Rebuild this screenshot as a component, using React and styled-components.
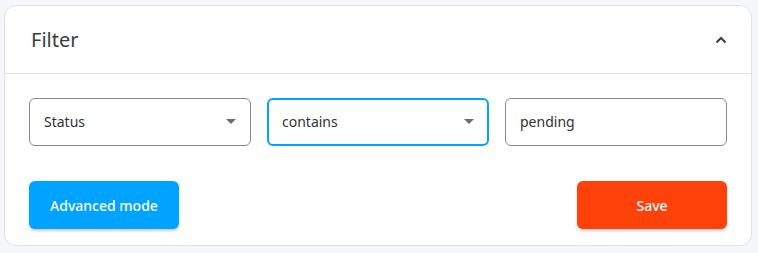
import React from "react";
import styled, { createGlobalStyle } from "styled-components";

const Global = createGlobalStyle`
  html, body { margin: 0; padding: 0; background: #f6f7fa; }
  body { font-family: "Noto Sans", "Open Sans", sans-serif; }
  * { box-sizing: border-box; }
`;

const Page = styled.div`
  padding: 5px 6px 7px 4px;
`;

const Card = styled.section`
  background: #fff;
  border: 1px solid #e0e2e8;
  border-radius: 12px;
`;

const Header = styled.div`
  height: 68px;
  display: flex;
  align-items: center;
  justify-content: space-between;
  padding: 0 24px 0 26px;
  border-bottom: 1px solid #e0e2e8;
`;

const Title = styled.h2`
  margin: 0;
  font-size: 20px;
  font-weight: 400;
  color: #3a3d42;
`;

const Body = styled.div`
  padding: 24px 24px 16px 24px;
`;

const Fields = styled.div`
  display: grid;
  grid-template-columns: repeat(3, 1fr);
  gap: 16px;
`;

const Field = styled.div`
  height: 48px;
  border: ${(p) => (p.$focused ? "2px solid #00a3ff" : "1px solid #868b93")};
  border-radius: 6px;
  display: flex;
  align-items: center;
  justify-content: space-between;
  padding: 0 ${(p) => (p.$focused ? "13px" : "14px")} 2px;
  font-size: 14px;
  color: #2f3237;
`;

const Caret = styled.span`
  width: 0;
  height: 0;
  border-left: 5px solid transparent;
  border-right: 5px solid transparent;
  border-top: 5px solid #6b6f75;
`;

const Actions = styled.div`
  margin-top: 35px;
  display: flex;
  justify-content: space-between;
`;

const Button = styled.button`
  width: 150px;
  height: 48px;
  border: none;
  border-radius: 6px;
  background: ${(p) => p.$bg};
  color: #fff;
  font-family: inherit;
  font-size: 14px;
  font-weight: 500;
  box-shadow: 0 2px 3px rgba(0, 0, 0, 0.2);
  cursor: pointer;
`;

export default function App() {
  return (
    <>
      <Global />
      <Page>
        <Card>
          <Header>
            <Title>Filter</Title>
            <svg width="12" height="8" viewBox="0 0 12 8">
              <path d="M1.5 6.5 L6 2 L10.5 6.5" fill="none" stroke="#3a3d42" strokeWidth="2" />
            </svg>
          </Header>
          <Body>
            <Fields>
              <Field>
                <span>Status</span>
                <Caret />
              </Field>
              <Field $focused>
                <span>contains</span>
                <Caret />
              </Field>
              <Field>
                <span>pending</span>
              </Field>
            </Fields>
            <Actions>
              <Button $bg="#00a3ff">Advanced mode</Button>
              <Button $bg="#ff410a">Save</Button>
            </Actions>
          </Body>
        </Card>
      </Page>
    </>
  );
}
